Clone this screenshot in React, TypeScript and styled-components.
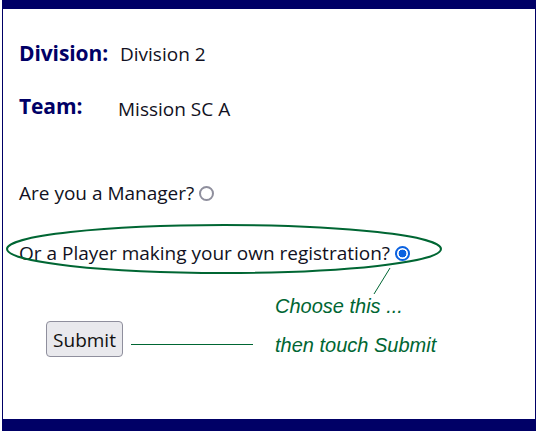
import React from "react";
import styled, { createGlobalStyle } from "styled-components";

const Global = createGlobalStyle`
  html, body { margin: 0; padding: 0; background: #fff; overflow: hidden; }
  body { font-family: "Open Sans", "Noto Sans", sans-serif; }
`;

const Frame = styled.div`
  position: relative;
  box-sizing: border-box;
  margin-left: 2px;
  width: 534px;
  height: 431px;
  border-left: 1px solid #000066;
  border-right: 1px solid #000066;
  border-top: 9px solid #000066;
  border-bottom: 12px solid #000066;
  padding: 30px 0 0 16px;
`;

const InfoRow = styled.div<{ $gap: number }>`
  display: flex;
  align-items: baseline;
  height: 26px;
  margin-bottom: ${(p) => p.$gap}px;
`;

const Label = styled.span<{ $w: number; $lift?: number }>`
  width: ${(p) => p.$w}px;
  font-family: "Open Sans", sans-serif;
  font-weight: 700;
  font-size: 21px;
  letter-spacing: -0.1px;
  color: #000066;
  position: relative;
  top: ${(p) => -(p.$lift || 0)}px;
`;

const Value = styled.span`
  font-size: 19px;
  color: #111122;
`;

const Question = styled.label<{ $gap: number }>`
  display: flex;
  align-items: center;
  gap: 5px;
  font-size: 19px;
  color: #111122;
  height: 26px;
  margin-top: ${(p) => p.$gap}px;
`;

const Radio = styled.input.attrs({ type: "radio" })`
  appearance: none;
  -webkit-appearance: none;
  margin: 1px 0 0 0;
  box-sizing: border-box;
  width: 15px;
  height: 15px;
  border-radius: 50%;
  border: 2px solid #8f8f9d;
  background: #fff;
  &:checked {
    border-color: #0b62e0;
    background: radial-gradient(circle, #0b62e0 0 3.6px, #fff 4.2px);
  }
`;

const Note = styled.div`
  font-family: "Liberation Sans", Arial, sans-serif;
  font-style: italic;
  font-size: 20px;
  color: #006633;
`;

const ChooseNote = styled(Note)`
  margin: 29px 0 0 256px;
  height: 23px;
`;

const SubmitRow = styled.div`
  display: flex;
  align-items: center;
  margin: 3px 0 0 27px;
`;

const SubmitButton = styled.button`
  box-sizing: border-box;
  width: 77px;
  height: 36px;
  padding: 2px 0 0;
  border: 1px solid #8f8f9d;
  border-radius: 4px;
  background: #e9e9ed;
  font-family: "Open Sans", sans-serif;
  font-size: 19px;
  color: #111;
`;

const Connector = styled.div`
  width: 122px;
  height: 1px;
  background: #006633;
  margin: 11px 22px 0 8px;
`;

const SubmitNote = styled(Note)`
  margin-top: 13px;
`;

const Overlay = styled.svg`
  position: absolute;
  left: 0;
  top: 0;
  pointer-events: none;
`;

export default function App() {
  return (
    <>
      <Global />
      <Frame>
        <InfoRow $gap={29}>
          <Label $w={101}>Division:</Label>
          <Value>Division 2</Value>
        </InfoRow>
        <InfoRow $gap={0}>
          <Label $w={99} $lift={2}>Team:</Label>
          <Value>Mission SC A</Value>
        </InfoRow>
        <Question $gap={60}>
          Are you a Manager? <Radio name="role" />
        </Question>
        <Question $gap={34}>
          Or a Player making your own registration? <Radio name="role" defaultChecked />
        </Question>
        <ChooseNote>Choose this ...</ChooseNote>
        <SubmitRow>
          <SubmitButton>Submit</SubmitButton>
          <Connector />
          <SubmitNote>then touch Submit</SubmitNote>
        </SubmitRow>
        <Overlay width="532" height="410" viewBox="0 0 532 410">
          <ellipse cx="221" cy="240" rx="217" ry="24" fill="none" stroke="#006633" strokeWidth="2" />
          <line x1="387" y1="259" x2="371" y2="285" stroke="#006633" strokeWidth="1" />
        </Overlay>
      </Frame>
    </>
  );
}
